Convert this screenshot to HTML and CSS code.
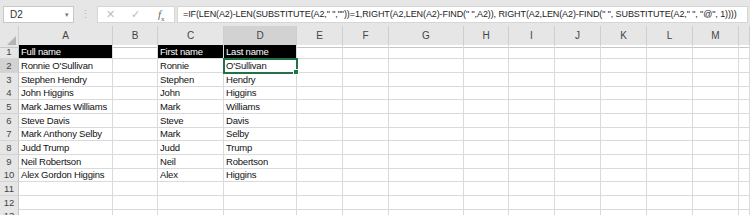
FILE: index.html
```html
<!DOCTYPE html>
<html lang="en">
<head>
    <meta charset="UTF-8">
    <title>Split names</title>
    <link rel="stylesheet" href="styles.css">
</head>
<body>
<div class="toolbar">
    <div class="namebox">D2<span class="drop">&#9662;</span></div>
    <div class="dots">&#8942;</div>
    <div class="fxbox">
        <span class="fxbtn cancel">&#10005;</span>
        <span class="fxbtn ok">&#10003;</span>
        <span class="fxbtn fx"><i>f</i><sub>x</sub></span>
    </div>
    <div class="formula">=IF(LEN(A2)-LEN(SUBSTITUTE(A2," ",""))=1,RIGHT(A2,LEN(A2)-FIND(" ",A2)), RIGHT(A2,LEN(A2)-FIND(" ", SUBSTITUTE(A2," ", "@", 1))))</div>
</div>

<div class="sheet">
    <!-- column headers -->
    <div class="row head">
        <div class="corner"></div>
        <div class="ch">A</div><div class="ch">B</div><div class="ch">C</div><div class="ch sel">D</div>
        <div class="ch">E</div><div class="ch">F</div><div class="ch">G</div><div class="ch">H</div>
        <div class="ch">I</div><div class="ch">J</div><div class="ch">K</div><div class="ch">L</div>
        <div class="ch">M</div><div class="ch"></div>
    </div>

    <div class="row">
        <div class="rh">1</div>
        <div class="c dark">Full name</div><div class="c"></div><div class="c dark">First name</div><div class="c dark">Last name</div>
        <div class="c"></div><div class="c"></div><div class="c"></div><div class="c"></div><div class="c"></div>
        <div class="c"></div><div class="c"></div><div class="c"></div><div class="c"></div><div class="c"></div>
    </div>
    <div class="row">
        <div class="rh sel">2</div>
        <div class="c">Ronnie O'Sullivan</div><div class="c"></div><div class="c">Ronnie</div><div class="c active">O'Sullivan<span class="handle"></span></div>
        <div class="c"></div><div class="c"></div><div class="c"></div><div class="c"></div><div class="c"></div>
        <div class="c"></div><div class="c"></div><div class="c"></div><div class="c"></div><div class="c"></div>
    </div>
    <div class="row">
        <div class="rh">3</div>
        <div class="c">Stephen Hendry</div><div class="c"></div><div class="c">Stephen</div><div class="c">Hendry</div>
        <div class="c"></div><div class="c"></div><div class="c"></div><div class="c"></div><div class="c"></div>
        <div class="c"></div><div class="c"></div><div class="c"></div><div class="c"></div><div class="c"></div>
    </div>
    <div class="row">
        <div class="rh">4</div>
        <div class="c">John Higgins</div><div class="c"></div><div class="c">John</div><div class="c">Higgins</div>
        <div class="c"></div><div class="c"></div><div class="c"></div><div class="c"></div><div class="c"></div>
        <div class="c"></div><div class="c"></div><div class="c"></div><div class="c"></div><div class="c"></div>
    </div>
    <div class="row">
        <div class="rh">5</div>
        <div class="c">Mark James Williams</div><div class="c"></div><div class="c">Mark</div><div class="c">Williams</div>
        <div class="c"></div><div class="c"></div><div class="c"></div><div class="c"></div><div class="c"></div>
        <div class="c"></div><div class="c"></div><div class="c"></div><div class="c"></div><div class="c"></div>
    </div>
    <div class="row">
        <div class="rh">6</div>
        <div class="c">Steve Davis</div><div class="c"></div><div class="c">Steve</div><div class="c">Davis</div>
        <div class="c"></div><div class="c"></div><div class="c"></div><div class="c"></div><div class="c"></div>
        <div class="c"></div><div class="c"></div><div class="c"></div><div class="c"></div><div class="c"></div>
    </div>
    <div class="row">
        <div class="rh">7</div>
        <div class="c">Mark Anthony Selby</div><div class="c"></div><div class="c">Mark</div><div class="c">Selby</div>
        <div class="c"></div><div class="c"></div><div class="c"></div><div class="c"></div><div class="c"></div>
        <div class="c"></div><div class="c"></div><div class="c"></div><div class="c"></div><div class="c"></div>
    </div>
    <div class="row">
        <div class="rh">8</div>
        <div class="c">Judd Trump</div><div class="c"></div><div class="c">Judd</div><div class="c">Trump</div>
        <div class="c"></div><div class="c"></div><div class="c"></div><div class="c"></div><div class="c"></div>
        <div class="c"></div><div class="c"></div><div class="c"></div><div class="c"></div><div class="c"></div>
    </div>
    <div class="row">
        <div class="rh">9</div>
        <div class="c">Neil Robertson</div><div class="c"></div><div class="c">Neil</div><div class="c">Robertson</div>
        <div class="c"></div><div class="c"></div><div class="c"></div><div class="c"></div><div class="c"></div>
        <div class="c"></div><div class="c"></div><div class="c"></div><div class="c"></div><div class="c"></div>
    </div>
    <div class="row">
        <div class="rh">10</div>
        <div class="c">Alex Gordon Higgins</div><div class="c"></div><div class="c">Alex</div><div class="c">Higgins</div>
        <div class="c"></div><div class="c"></div><div class="c"></div><div class="c"></div><div class="c"></div>
        <div class="c"></div><div class="c"></div><div class="c"></div><div class="c"></div><div class="c"></div>
    </div>
    <div class="row">
        <div class="rh">11</div>
        <div class="c"></div><div class="c"></div><div class="c"></div><div class="c"></div>
        <div class="c"></div><div class="c"></div><div class="c"></div><div class="c"></div><div class="c"></div>
        <div class="c"></div><div class="c"></div><div class="c"></div><div class="c"></div><div class="c"></div>
    </div>
    <div class="row">
        <div class="rh">12</div>
        <div class="c"></div><div class="c"></div><div class="c"></div><div class="c"></div>
        <div class="c"></div><div class="c"></div><div class="c"></div><div class="c"></div><div class="c"></div>
        <div class="c"></div><div class="c"></div><div class="c"></div><div class="c"></div><div class="c"></div>
    </div>
    <div class="row">
        <div class="rh">13</div>
        <div class="c"></div><div class="c"></div><div class="c"></div><div class="c"></div>
        <div class="c"></div><div class="c"></div><div class="c"></div><div class="c"></div><div class="c"></div>
        <div class="c"></div><div class="c"></div><div class="c"></div><div class="c"></div><div class="c"></div>
    </div>
</div>
</body>
</html>
```

FILE: styles.css
```css
body {
    margin: 0;
    background: #fff;
    overflow: hidden;
    font-family: "Liberation Sans", Arial, sans-serif;
}

/* formula bar */
.toolbar {
    display: flex;
    height: 26px;
    padding: 6px 2px 0 3px;
    box-sizing: border-box;
    background: #e6e6e6;
}
.namebox {
    position: relative;
    width: 71px;
    height: 17px;
    box-sizing: border-box;
    background: #fff;
    border: 1px solid #c8c8c8;
    font-size: 10px;
    line-height: 15px;
    padding-left: 6px;
    color: #333;
}
.drop {
    position: absolute;
    right: 4px;
    top: 0;
    font-size: 7px;
    color: #777;
}
.dots {
    width: 23px;
    text-align: center;
    font-size: 11px;
    line-height: 17px;
    color: #b5b5b5;
}
.fxbox {
    display: flex;
    width: 78px;
    height: 17px;
    box-sizing: border-box;
    background: #fff;
    border: 1px solid #d6d6d6;
}
.fxbtn {
    flex: 1;
    text-align: center;
    font-size: 11px;
    line-height: 15px;
    color: #bdbdbd;
}
.fxbtn.fx {
    color: #666;
    font-family: "Liberation Serif", serif;
    font-size: 11px;
}
.fxbtn.fx sub {
    font-size: 7px;
}
.formula {
    flex: 1;
    margin-left: 2px;
    height: 17px;
    box-sizing: border-box;
    background: #fff;
    border: 1px solid #d6d6d6;
    padding-left: 5px;
    font-size: 9px;
    letter-spacing: -0.1px;
    line-height: 15px;
    color: #222;
    white-space: nowrap;
    overflow: hidden;
}

/* grid */
.row {
    display: grid;
    grid-template-columns: 19px 94px 45px 66px 73px 46px 46px 75px 45px 46px 46px 46px 46px 46px 1fr;
    height: 13.67px;
}
.row.head {
    height: 19.3px;
    background: #e6e6e6;
}
.ch {
    border-right: 1px solid #cfcfcf;
    border-bottom: 1px solid #c6c6c6;
    font-size: 10px;
    line-height: 20px;
    text-align: center;
    color: #444;
}
.ch.sel {
    background: #d2d2d2;
    border-bottom: 2px solid #217346;
}
.corner {
    position: relative;
    border-right: 1px solid #cfcfcf;
    border-bottom: 1px solid #c6c6c6;
}
.corner::after {
    content: "";
    position: absolute;
    right: 2px;
    bottom: 2px;
    border-style: solid;
    border-width: 0 0 9px 9px;
    border-color: transparent transparent #b4b4b4 transparent;
}
.rh {
    background: #e6e6e6;
    border-right: 1px solid #c6c6c6;
    border-bottom: 1px solid #d4d4d4;
    font-size: 9.5px;
    line-height: 13px;
    text-align: center;
    color: #444;
}
.rh.sel {
    background: #d2d2d2;
}
.c {
    position: relative;
    border-right: 1px solid #dadada;
    border-bottom: 1px solid #dadada;
    box-sizing: border-box;
    padding-left: 2px;
    font-size: 9.5px;
    letter-spacing: -0.2px;
    line-height: 13px;
    color: #111;
    white-space: nowrap;
}
.c.dark {
    background: #000;
    color: #fff;
}
.c.active {
    outline: 2px solid #217346;
    outline-offset: -1px;
    z-index: 1;
}
.handle {
    position: absolute;
    right: -3px;
    bottom: -3px;
    width: 4px;
    height: 4px;
    background: #217346;
    border: 1px solid #fff;
}
```
